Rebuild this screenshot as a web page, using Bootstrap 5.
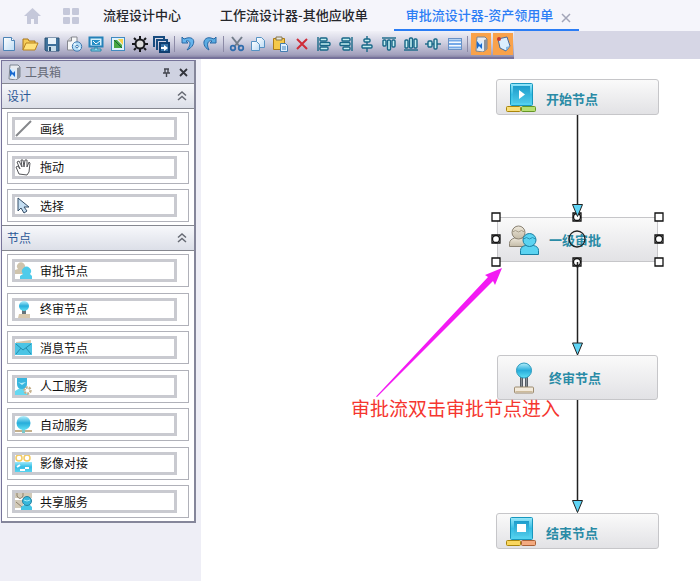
<!DOCTYPE html>
<html lang="zh-CN">
<head>
<meta charset="utf-8">
<meta name="viewport" content="width=device-width, initial-scale=1">
<title>审批流设计器</title>
<link href="https://cdn.jsdelivr.net/npm/bootstrap@5.3.0/dist/css/bootstrap.min.css" rel="stylesheet">
<style>
body{font-family:"Noto Sans CJK SC",sans-serif;font-size:12px;line-height:16px;color:#111;background:#eeeef6}
.tabs-bar{background:#f5f5fb;height:31px}
.tabs-bar a{color:#25262b;font-size:13px;font-weight:500;line-height:30px;height:31px;white-space:nowrap}
.tabs-bar a.active{color:#2b7df5}
.tab-current{border-bottom:2px solid #2b7df5;height:31px}
.tab-main{margin-left:23px}
.tab-second{margin-left:39px}
.tab-current{margin-left:26px;padding:0 8px 0 12px}
.home-link{margin-left:24px}
.grid-link{margin-left:22px}
.tools-row{background:#d6d6e5;overflow:hidden}
.tools{flex:0 1 516px;margin-left:-2px;height:28px;background:linear-gradient(#f1f1f7,#cfcfe0 45%,#a3a1bd 90%,#8a87a8);border-bottom:2px solid #77739b}
.tools button{flex:1 1 0;height:24px;min-width:0;border:1px solid transparent;background-clip:padding-box}
.tools button.on{background-color:#f9a24a}
.tools svg{display:block;margin:auto}
.divider{width:5px;height:16px;border-left:2px solid transparent;border-right:2px solid transparent;background:#8c8aa6;background-clip:padding-box}
.plain{background:none;border:0;padding:0}
.side{width:201px;padding:1px 5px 0 1px}
.panel{border:1px solid #77749a;border-right:2px solid #85869a;border-bottom:2px solid #85869a;background:#fff}
.panel-top{height:22px;background:#cfd2e1;color:#666a78;padding:0 6px 0 5px}
.section-head{height:26px;background:linear-gradient(#f7f8fb,#dcdfe8);border-top:1px solid #85878f;border-bottom:1px solid #85878f;color:#2c5896;padding:0 7px 0 5px}
.tool-list{padding:3px 5px;align-content:space-between}
.list-short{min-height:116px}
.list-long{min-height:270px}
.tool-box{height:33px;border:1px solid #b0b1b9;padding:4px 11px 4px 4px;background:#fff}
.tool-item{border:3px solid #c9cad0;height:23px;background:#fff;color:#111}
.tool-item svg{margin-right:8px;display:block}
.board{background:#fff;overflow:hidden}
.links-layer,.handles{position:absolute;left:0;top:0;pointer-events:none}
.flow-node{position:absolute;border:1px solid #c6c6c9;border-radius:3px;background:linear-gradient(#fafafa,#e2e2e5);color:#2a8ba6;font-size:13px;font-weight:700;line-height:18px;padding:0;white-space:nowrap}
.node-end{left:295px;width:163px;height:36px;padding:3px 0 0 8px}
.node-mid{left:296px;width:161px;height:45px;padding-left:9px}
.node-end svg{margin:0 9px 3px 0}
.node-mid svg{margin-right:9px}
.at-start{top:20px}.at-first{top:158px}.at-final{top:296px}.at-stop{top:454px}
.hint{position:absolute;left:150px;top:336px;font-size:19px;line-height:26px;color:#f5362f;white-space:nowrap}
</style>
</head>
<body class="d-flex flex-column min-vh-100">
<svg width="0" height="0" class="position-absolute" aria-hidden="true">
<defs>
<linearGradient id="aqua" x2="0" y2="1"><stop stop-color="#9be8fa"/><stop offset=".5" stop-color="#35bde4"/><stop offset="1" stop-color="#58d4f0"/></linearGradient>
<linearGradient id="ball" x2="0" y2="1"><stop stop-color="#b5effb"/><stop offset=".5" stop-color="#27addb"/><stop offset="1" stop-color="#5fe0f5"/></linearGradient>
<linearGradient id="screen" x2="0" y2="1"><stop stop-color="#1d9ccb"/><stop offset="1" stop-color="#4cc8e8"/></linearGradient>
<linearGradient id="beige" x2="0" y2="1"><stop stop-color="#eee8db"/><stop offset="1" stop-color="#c4bba7"/></linearGradient>
<linearGradient id="paper" x2="1" y2="1"><stop stop-color="#fff"/><stop offset="1" stop-color="#bddcf5"/></linearGradient>
<symbol id="people" viewBox="0 0 32 32"><g fill="url(#beige)" stroke="#8b8374"><path d="M2 22.500v-3q0-4 5-5.500h8q5 1 5 5v3.500Z"/><circle cx="11" cy="8.500" r="6.500"/></g><path d="M5 8q3-3 6 0 3-3 6 0" fill="none" stroke="#a89f8c"/><g fill="#5bd3f1" stroke="#187fa3"><path d="M13 30.500v-4q0-4 5-5h8q5 1 5 5v4Z"/><circle cx="22" cy="16" r="6.500"/></g><path d="M16 15q3-3 6 0 3-3 6 0" fill="none" stroke="#2a93b5"/></symbol>
<symbol id="post" viewBox="0 0 32 32"><path d="M13 14h2v11h-2zM18 14h2v11h-2z" fill="#8a9196" stroke="#555b63"/><rect x="7" y="25" width="19" height="6" rx="1" fill="#f3eadb" stroke="#9d8c70"/><path d="M8 29.500h17" stroke="#cdbb9b"/><circle cx="16.500" cy="8.500" r="7.500" fill="url(#ball)" stroke="#2b9abd"/></symbol>
<symbol id="toolbox" viewBox="0 0 14 16"><path d="M3 1h8l2 2v10l-4 3-7-1Z" fill="#e8ebf0" stroke="#7b8490"/><path d="M10 4v11l3-2V3Z" fill="#8b929c"/><path d="m3 4 6 2v8l-6-1Z" fill="#d6ecff"/><path d="M3 5v8l2-3 3 3V7L6 9Z" fill="#1769cf"/></symbol>
<symbol id="chevrons" viewBox="0 0 10 10"><path d="m1 4.500 4-3.500 4 3.500M1 9l4-3.500L9 9" fill="none" stroke="#666a73" stroke-width="1.500"/></symbol>
</defs>
</svg>

<nav class="tabs-bar d-flex" aria-label="页签">
<a class="home-link d-flex align-items-center" href="#" aria-label="首页"><svg width="17" height="16" viewBox="0 0 17 16"><path d="M8.500 0 0 8h3v8h4v-5h3v5h4V8h3Z" fill="#c5c8da"/></svg></a>
<a class="grid-link d-flex align-items-center" href="#" aria-label="应用"><svg width="17" height="16" viewBox="0 0 17 16" fill="#c5c8da"><rect width="7" height="7" rx="1"/><rect x="9" width="7" height="7" rx="1"/><rect y="9" width="7" height="7" rx="1"/><rect x="9" y="9" width="7" height="7" rx="1"/></svg></a>
<a class="tab-main text-decoration-none" href="#">流程设计中心</a>
<a class="tab-second text-decoration-none" href="#">工作流设计器-其他应收单</a>
<div class="tab-current d-flex"><a class="active text-decoration-none" href="#" aria-current="page">审批流设计器-资产领用单</a>
<button class="plain ms-2 pt-1" type="button" aria-label="关闭页签"><svg width="10" height="10" viewBox="0 0 10 10"><path d="m1 1 8 8m0-8-8 8" stroke="#a2a5b8" stroke-width="1.500"/></svg></button></div>
</nav>

<div class="tools-row d-flex">
<div class="tools d-flex align-items-center" role="toolbar" aria-label="工具栏">
<button class="plain" type="button" aria-label="新建"><svg width="16" height="16"><path d="M2.500 1.500h8l3 3v10h-11Z" fill="url(#paper)" stroke="#4c83b6"/><path d="M10.500 1.500v3h3" fill="#fff" stroke="#4c83b6"/></svg></button>
<button class="plain" type="button" aria-label="打开"><svg width="17" height="16"><path d="M1 14V3h5l1 2h6v3" fill="#f6cc58" stroke="#a7741c"/><path d="M1 14 4 7h12l-3 7Z" fill="#ffe27c" stroke="#b9821d"/></svg></button>
<button class="plain" type="button" aria-label="保存"><svg width="16" height="16"><path d="M1 2h14v13H2l-1-1Z" fill="#3f719b" stroke="#2d5577"/><path d="M4 2h8v6H4Z" fill="#e9f3fa"/><path d="M4 10h8v5H4Z" fill="#c8dce9"/><path d="M5 11h2v4H5Z" fill="#28506f"/></svg></button>
<button class="plain" type="button" aria-label="另存"><svg width="17" height="16"><path d="m1.500 5 4-4H11v13H1.500Z" fill="#f6f7f8" stroke="#85878f"/><path d="M1.500 5h4V1" fill="#ccc" stroke="#85878f"/><circle cx="11" cy="10.500" r="4.700" fill="#b5dff9" stroke="#3e76ad"/><path d="M8 7.500 14 13" stroke="#e7f6ff" stroke-width="2"/><circle cx="11" cy="10.500" r="1.300" fill="#fff" stroke="#3e76ad"/></svg></button>
<button class="plain" type="button" aria-label="预览"><svg width="16" height="16"><rect x="1.500" y="1.500" width="13" height="9" fill="#d6f0fb" stroke="#2581b8" stroke-width="2"/><path d="M4 4h8v5H4Z" fill="#248fc6"/><path d="m5 5 3 3 4-3" fill="none" stroke="#fff"/><path d="M7 11h2v2h4v2H3v-2h4Z" fill="#8fdced" stroke="#2683a9"/></svg></button>
<button class="plain" type="button" aria-label="图像"><svg width="16" height="16"><rect x="1.500" y="1.500" width="13" height="13" fill="#dff2fc" stroke="#428bc0"/><path d="M4 4h3l5 5v3H4Z" fill="#49a743"/><path d="M8 3h5v6Z" fill="#f6d34b"/><path d="m4 4 8 8" stroke="#15653a"/></svg></button>
<button class="plain" type="button" aria-label="设置"><svg width="18" height="18" viewBox="-9 -9 18 18"><circle r="4.500" fill="#ddd" stroke="#17181c" stroke-width="2"/><path d="M0-8v3M0 8V5M-8 0h3M8 0H5M-6-6l2 2M6-6 4-4M-6 6l2-2M6 6 4 4" stroke="#17181c" stroke-width="2"/></svg></button>
<button class="plain" type="button" aria-label="级联窗口"><svg width="17" height="17"><path d="M1 11V1h10v3M4 14V4h10v3" fill="none" stroke="#174b7f" stroke-width="2"/><rect x="7" y="7" width="9" height="9" fill="#3975aa" stroke="#103f70" stroke-width="2"/><path d="M8 11h3V9l4 3-4 3v-2H8Z" fill="#fff"/></svg></button>
<span class="divider"></span>
<button class="plain" type="button" aria-label="撤销"><svg width="16" height="16"><path d="M2 1v6h6L6 5c4-1 6 3 1 9 9-4 9-14 0-12L4 3Z" fill="#65b4ed" stroke="#2869a6"/></svg></button>
<button class="plain" type="button" aria-label="重做"><svg width="16" height="16"><path d="M14 1v6H8l2-2C6 4 4 8 7 14-1 10 1 0 9 2l3 1Z" fill="#5bace2" stroke="#2869a6"/></svg></button>
<span class="divider"></span>
<button class="plain" type="button" aria-label="剪切"><svg width="16" height="16"><path d="m3 1 8 10M13 1 5 11" stroke="#737d8a" stroke-width="2"/><circle cx="4" cy="12" r="2.300" fill="none" stroke="#2f6cad" stroke-width="1.700"/><circle cx="12" cy="12" r="2.300" fill="none" stroke="#2f6cad" stroke-width="1.700"/></svg></button>
<button class="plain" type="button" aria-label="复制"><svg width="16" height="16" fill="url(#paper)" stroke="#5692c3"><path d="M6.500 1.500h5l3 3v7h-8Z"/><path d="M1.500 5.500h5l3 3v6h-8Z"/></svg></button>
<button class="plain" type="button" aria-label="粘贴"><svg width="17" height="17"><path d="M1.500 2.500h11v11h-11Z" fill="#f4c84a" stroke="#ac7b17"/><path d="M4 1h6v3H4Z" fill="#e7e7dc" stroke="#85754b"/><path d="M8.500 7.500h5l2 2v6h-7Z" fill="#dfefff" stroke="#457db0"/><path d="M10 11h4m-4 2h4" stroke="#4585bd"/></svg></button>
<button class="plain" type="button" aria-label="删除"><svg width="14" height="14"><path d="m2 2 10 10M12 2 2 12" stroke="#cf2c38" stroke-width="2"/></svg></button>
<button class="plain" type="button" aria-label="左对齐"><svg width="16" height="16" fill="#c4eef0" stroke="#176787" stroke-width="1.400"><path d="M2 1v14"/><rect x="4" y="2" width="7" height="3" rx="1"/><rect x="4" y="6.500" width="10" height="3" rx="1"/><rect x="4" y="11" width="8" height="3" rx="1"/></svg></button>
<button class="plain" type="button" aria-label="右对齐"><svg width="16" height="16" fill="#c4eef0" stroke="#176787" stroke-width="1.400"><path d="M14 1v14"/><rect x="4" y="2" width="8" height="3" rx="1"/><rect x="2" y="6.500" width="10" height="3" rx="1"/><rect x="5" y="11" width="7" height="3" rx="1"/></svg></button>
<button class="plain" type="button" aria-label="水平居中"><svg width="16" height="16" fill="#c4eef0" stroke="#176787" stroke-width="1.400"><path d="M8 0v16"/><rect x="5" y="3" width="6" height="3" rx="1"/><rect x="3" y="9" width="10" height="3" rx="1"/></svg></button>
<button class="plain" type="button" aria-label="顶端对齐"><svg width="16" height="16" fill="#c4eef0" stroke="#176787" stroke-width="1.400"><path d="M1 2h14"/><rect x="2" y="4" width="3" height="6" rx="1"/><rect x="6.500" y="4" width="3" height="10" rx="1"/><rect x="11" y="4" width="3" height="7" rx="1"/></svg></button>
<button class="plain" type="button" aria-label="底端对齐"><svg width="16" height="16" fill="#c4eef0" stroke="#176787" stroke-width="1.400"><path d="M1 14h14"/><rect x="2" y="4" width="3" height="8" rx="1"/><rect x="6.500" y="2" width="3" height="10" rx="1"/><rect x="11" y="3" width="3" height="9" rx="1"/></svg></button>
<button class="plain" type="button" aria-label="垂直居中"><svg width="16" height="16" fill="#c4eef0" stroke="#176787" stroke-width="1.400"><path d="M0 8h16"/><rect x="3" y="5" width="4" height="6" rx="1"/><rect x="9" y="3" width="3" height="10" rx="1"/></svg></button>
<button class="plain" type="button" aria-label="列表"><svg width="16" height="16"><rect x="1.500" y="2.500" width="13" height="11" fill="#f5faff" stroke="#6a91c4"/><path d="M2 4.500h12M2 8h12m-12 3.500h12" stroke="#75a9e8" stroke-width="2"/></svg></button>
<span class="divider"></span>
<button class="plain on" type="button" aria-label="工具箱" aria-pressed="true"><svg width="14" height="16"><use href="#toolbox"/></svg></button>
<button class="plain on" type="button" aria-label="便签" aria-pressed="true"><svg width="16" height="16"><path d="m3 3 9-2 3 9-4 5-6-3Z" fill="#dceefd" stroke="#466b9c"/><path d="m11 15 0-4 4-1Z" fill="#85b8e4"/><circle cx="4" cy="3" r="2" fill="#c93a2e"/></svg></button>
</div>
</div>

<div class="d-flex flex-grow-1">
<aside class="side flex-shrink-0">
<section class="panel">
<div class="panel-top d-flex align-items-center"><svg width="14" height="16" class="me-1"><use href="#toolbox"/></svg><span class="me-auto">工具箱</span>
<button class="plain d-flex me-2" type="button" aria-label="固定"><svg width="9" height="9"><path d="M2 1h5M3 1v4M6 1v4M1 5h7M4.500 5v4" stroke="#44464f" stroke-width="1.400"/></svg></button>
<button class="plain d-flex" type="button" aria-label="关闭"><svg width="9" height="9"><path d="m1 1 7 7m0-7L1 8" stroke="#33353d" stroke-width="1.800"/></svg></button></div>
<button class="plain section-head d-flex w-100 align-items-center justify-content-between" type="button" aria-expanded="true"><span>设计</span><svg width="10" height="10"><use href="#chevrons"/></svg></button>
<div class="tool-list list-short d-grid">
<div class="tool-box"><button type="button" class="plain tool-item d-flex align-items-center w-100"><svg width="17" height="17"><path d="M1 16 16 1" stroke="#85878b" stroke-width="2"/></svg>画线</button></div>
<div class="tool-box"><button type="button" class="plain tool-item d-flex align-items-center w-100"><svg width="17" height="17"><path d="M4 15 1 8l2-1 2 3L2 3l2-1 3 6-1-7h2l1 7 1-7h2v7l2-5 1 1-1 9-2 3Z" fill="#fff" stroke="#55565a"/></svg>拖动</button></div>
<div class="tool-box"><button type="button" class="plain tool-item d-flex align-items-center w-100"><svg width="17" height="17"><path d="M3 1v13l3-3 3 5 3-2-3-4h5Z" fill="#c4def2" stroke="#354d66"/></svg>选择</button></div>
</div>
<button class="plain section-head d-flex w-100 align-items-center justify-content-between" type="button" aria-expanded="true"><span>节点</span><svg width="10" height="10"><use href="#chevrons"/></svg></button>
<div class="tool-list list-long d-grid">
<div class="tool-box"><button type="button" class="plain tool-item d-flex align-items-center w-100"><svg width="17" height="17"><path d="M0 12V8l3-1a4 4 0 1 1 6 0l2 1v4Z" fill="#cfc4ad"/><path d="M5 17v-3l3-2a4.500 4.500 0 1 1 7 0l2 2v3Z" fill="#4fcbea"/></svg>审批节点</button></div>
<div class="tool-box"><button type="button" class="plain tool-item d-flex align-items-center w-100"><svg width="17" height="17"><path d="M7 7h4v6H7Z" fill="#66747b"/><path d="M4 13h11v4H3Z" fill="#d8c9af"/><circle cx="9" cy="5" r="5" fill="url(#ball)"/></svg>终审节点</button></div>
<div class="tool-box"><button type="button" class="plain tool-item d-flex align-items-center w-100"><svg width="17" height="17"><path d="m1 3 15-2v5H1Z" fill="#d5c7ad"/><rect y="4" width="17" height="12" fill="#4bc4e4"/><path d="m1 5 7 6 8-6M1 15l5-6m10 6-5-6" fill="none" stroke="#238dae"/></svg>消息节点</button></div>
<div class="tool-box"><button type="button" class="plain tool-item d-flex align-items-center w-100"><svg width="17" height="17"><path d="M0 17v-4l5-3h4l4 3v4Z" fill="#64d8f1"/><path d="M2 0h10v6q0 5-5 5T2 6Z" fill="#38b6df"/><path d="m3 4 3 1 5-1-4 3Z" fill="#b6effa"/><circle cx="12.500" cy="12.500" r="3" fill="#fff" stroke="#c4b08c" stroke-width="2.500" stroke-dasharray="2 1"/></svg>人工服务</button></div>
<div class="tool-box"><button type="button" class="plain tool-item d-flex align-items-center w-100"><svg width="17" height="17"><path d="M0 15h17" stroke="#c4b08c" stroke-width="2"/><path d="M7 13h3v4H7Z" fill="#79c8ca"/><circle cx="8.500" cy="7" r="7" fill="url(#ball)"/></svg>自动服务</button></div>
<div class="tool-box"><button type="button" class="plain tool-item d-flex align-items-center w-100"><svg width="17" height="17"><path d="M0 7h17v10H0Z" fill="url(#aqua)"/><path d="m2 12 3-2m5 3h4m-9 2h5" stroke="#fff" stroke-width="2"/><circle cx="4" cy="3" r="3" fill="none" stroke="#f2ca61" stroke-width="1.500"/><circle cx="12" cy="3" r="3" fill="none" stroke="#f2ca61" stroke-width="1.500"/></svg>影像对接</button></div>
<div class="tool-box"><button type="button" class="plain tool-item d-flex align-items-center w-100"><svg width="17" height="17"><path d="M0 0h17v5H0Zm0 7h8v8H0Z" fill="#d2cab8"/><path d="M2 0v3q3 5 6 0V0M1 9l6 5" fill="none" stroke="#8d826f"/><path d="M6 17v-3l3-2h6l2 2v3Z" fill="#45c5e5"/><circle cx="12" cy="8" r="4.500" fill="#37b7db" stroke="#27819e"/><path d="m9 7 3 1 3-1" fill="none" stroke="#a9edf7"/></svg>共享服务</button></div>
</div>
</section>
</aside>

<main class="board position-relative flex-grow-1">
<svg class="links-layer" width="499" height="522" viewBox="201 59 499 522" aria-hidden="true"><path d="M577.500 114v91M577.500 261v82M577.500 399v101" stroke="#222" stroke-width="1.500"/><g fill="#5fd4f5" stroke="#222"><path d="M572.500 343h10l-5 12Z"/><path d="M572.500 500.500h10l-5 12Z"/></g></svg>
<button type="button" class="flow-node node-end at-start d-flex align-items-center"><svg width="32" height="32"><rect x="5.500" y="2.500" width="22" height="22" rx="1" fill="url(#aqua)" stroke="#1797be"/><rect x="8" y="5" width="17" height="17" fill="url(#screen)"/><path d="M14 9v9l6-4.500Z" fill="#fff"/><rect x="1.500" y="25.500" width="14" height="5" rx="1" fill="#f9df78" stroke="#a9850b"/><rect x="16.500" y="25.500" width="14" height="5" rx="1" fill="#b6df70" stroke="#669625"/></svg>开始节点</button>
<button type="button" class="flow-node node-mid at-first d-flex align-items-center"><svg width="33" height="32"><use href="#people"/></svg>一级审批</button>
<button type="button" class="flow-node node-mid at-final d-flex align-items-center"><svg width="33" height="32"><use href="#post"/></svg>终审节点</button>
<button type="button" class="flow-node node-end at-stop d-flex align-items-center"><svg width="32" height="32"><rect x="5.500" y="2.500" width="22" height="22" rx="1" fill="url(#aqua)" stroke="#1797be"/><rect x="9" y="6" width="15" height="15" fill="url(#screen)"/><rect x="12" y="9" width="9" height="8" fill="#fff"/><rect x="1.500" y="25.500" width="14" height="5" rx="1" fill="#f9d65e" stroke="#a9850b"/><rect x="16.500" y="25.500" width="14" height="5" rx="1" fill="#f3aa80" stroke="#a96036"/></svg>结束节点</button>
<svg class="handles" width="499" height="522" viewBox="201 59 499 522" aria-hidden="true">
<g fill="#fff" stroke="#111" stroke-width="1.300"><path d="M492 213h8v8h-8ZM573 213h8v8h-8ZM655 213h8v8h-8ZM492 235h8v8h-8ZM655 235h8v8h-8ZM492 258h8v8h-8ZM573 258h8v8h-8ZM655 258h8v8h-8Z"/><circle cx="577" cy="217" r="3.500"/><circle cx="496" cy="239" r="3.500"/><circle cx="659" cy="239" r="3.500"/><circle cx="577" cy="262" r="3.500"/></g>
<circle cx="577" cy="239" r="8" fill="none" stroke="#222" stroke-width="1.300"/><path d="M577.500 262v6" stroke="#222" stroke-width="1.500"/>
<path d="M572.500 204.500h10l-5 12Z" fill="#5fd4f5" stroke="#222"/>
<path d="M376 396.500 488 277 485 275 502 268l-7 17-2-4L377 397Z" fill="#f31af3"/>
</svg>
<div class="hint">审批流双击审批节点进入</div>
</main>
</div>
<script src="https://cdn.jsdelivr.net/npm/bootstrap@5.3.0/dist/js/bootstrap.bundle.min.js"></script>
</body>
</html>
